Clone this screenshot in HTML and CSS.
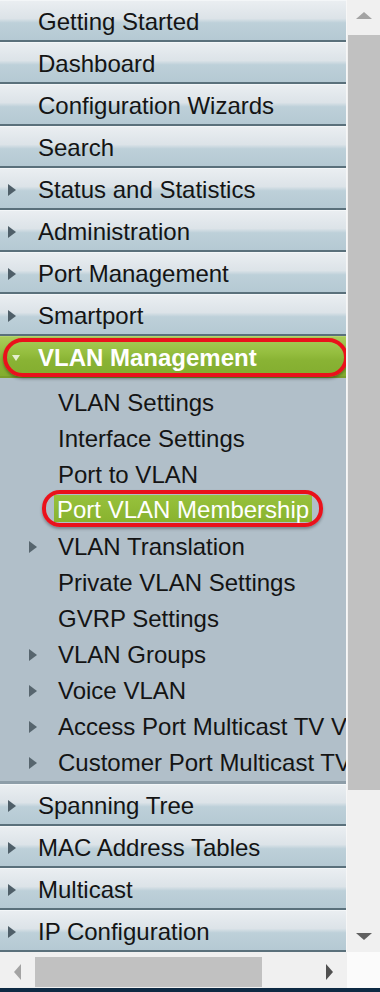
FILE: index.html
```html
<!DOCTYPE html>
<html lang="en">
<head>
    <meta charset="UTF-8">
    <meta name="viewport" content="width=device-width, initial-scale=1.0">
    <title>Switch Menu</title>
    <link rel="stylesheet" href="styles.css">
</head>
<body>
    <div class="window">
        <nav class="menu">
            <div class="top-row">Getting Started</div>
            <div class="top-row">Dashboard</div>
            <div class="top-row">Configuration Wizards</div>
            <div class="top-row">Search</div>
            <div class="top-row has-children"><span class="arrow"></span>Status and Statistics</div>
            <div class="top-row has-children"><span class="arrow"></span>Administration</div>
            <div class="top-row has-children"><span class="arrow"></span>Port Management</div>
            <div class="top-row has-children"><span class="arrow"></span>Smartport</div>
            <div class="top-row open"><span class="arrow-down"></span>VLAN Management</div>

            <div class="sub-list">
                <div class="sub-row">VLAN Settings</div>
                <div class="sub-row">Interface Settings</div>
                <div class="sub-row">Port to VLAN</div>
                <div class="sub-row"><span class="selected">Port VLAN Membership</span></div>
                <div class="sub-row"><span class="arrow"></span>VLAN Translation</div>
                <div class="sub-row">Private VLAN Settings</div>
                <div class="sub-row">GVRP Settings</div>
                <div class="sub-row"><span class="arrow"></span>VLAN Groups</div>
                <div class="sub-row"><span class="arrow"></span>Voice VLAN</div>
                <div class="sub-row"><span class="arrow"></span>Access Port Multicast TV VLAN</div>
                <div class="sub-row"><span class="arrow"></span>Customer Port Multicast TV VLAN</div>
            </div>

            <div class="top-row has-children"><span class="arrow"></span>Spanning Tree</div>
            <div class="top-row has-children"><span class="arrow"></span>MAC Address Tables</div>
            <div class="top-row has-children"><span class="arrow"></span>Multicast</div>
            <div class="top-row has-children"><span class="arrow"></span>IP Configuration</div>
        </nav>

        <!-- vertical scrollbar -->
        <div class="vscroll">
            <div class="scroll-btn"><span class="tri-up"></span></div>
            <div class="vthumb"></div>
            <div class="vtrack"></div>
            <div class="scroll-btn"><span class="tri-down"></span></div>
        </div>

        <!-- horizontal scrollbar -->
        <div class="hscroll">
            <div class="hbtn"><span class="tri-left"></span></div>
            <div class="hthumb"></div>
            <div class="htrack"></div>
            <div class="hbtn"><span class="tri-right"></span></div>
        </div>
        <div class="corner"></div>

        <div class="footer-line"></div>
    </div>
</body>
</html>
```

FILE: styles.css
```css
body {
    margin: 0;
    padding: 0;
    background-color: #f0f0f0;
    font-family: "Liberation Sans", Arial, sans-serif;
}

.window {
    width: 380px;
    height: 992px;
    display: grid;
    grid-template-columns: 347px 33px;
    grid-template-rows: 952px 36px 4px;
    overflow: hidden;
}

.menu {
    overflow: hidden;
    background-color: #fff;
    border-right: 1px solid #f7f7f7;
}

/* top level rows */
.top-row {
    height: 39px;
    line-height: 42px;
    border-top: 1px solid #f3f6f8;
    border-bottom: 2px solid #5a707b;
    background: linear-gradient(to bottom, #eaeef1 0%, #dce3e8 45%, #bdd0d9 56%, #b5c9d3 100%);
    padding-left: 38px;
    font-size: 24px;
    color: #141414;
    white-space: nowrap;
    position: relative;
}

.arrow {
    position: absolute;
    left: 8px;
    top: 50%;
    margin-top: -5px;
    width: 0;
    height: 0;
    border-left: 8px solid #4f5f69;
    border-top: 6px solid transparent;
    border-bottom: 6px solid transparent;
}

/* open section */
.top-row.open {
    background: linear-gradient(to bottom, #a9cc5a 0%, #95be3f 40%, #89b334 60%, #83ad2f 100%);
    border-top-color: #b6d46f;
    border-bottom-color: #7a9f2c;
    color: #fff;
    font-weight: bold;
}

.top-row.open::after {
    content: "";
    position: absolute;
    left: 3px;
    right: -2px;
    top: 1px;
    bottom: -1px;
    border: 4px solid #ea111b;
    border-radius: 21px;
    box-shadow: 0 2px 3px rgba(0, 0, 0, 0.35);
}

.arrow-down {
    position: absolute;
    left: 12px;
    top: 50%;
    margin-top: -2px;
    width: 0;
    height: 0;
    border-top: 6px solid #e4eed0;
    border-left: 4px solid transparent;
    border-right: 4px solid transparent;
}

/* sub menu */
.sub-list {
    background-color: #b1bfc9;
    padding-top: 6px;
    padding-bottom: 1px;
    border-bottom: 3px solid #8d9da8;
}

.sub-row {
    height: 36px;
    line-height: 38px;
    padding-left: 58px;
    font-size: 24px;
    color: #141414;
    white-space: nowrap;
    position: relative;
}

.sub-row .arrow {
    left: 29px;
    border-left-color: #57656e;
}

.selected {
    display: inline-block;
    position: relative;
    height: 27px;
    line-height: 29px;
    margin-left: -4px;
    padding: 0 3px;
    background: linear-gradient(to bottom, #98c23c, #88b22f);
    color: #fff;
    vertical-align: 1px;
}

.selected::after {
    content: "";
    position: absolute;
    left: -12px;
    right: -11px;
    top: -5px;
    bottom: -5px;
    border: 4px solid #ea111b;
    border-radius: 18px;
    box-shadow: 0 2px 3px rgba(0, 0, 0, 0.3);
}

/* scrollbars */
.vscroll {
    display: flex;
    flex-direction: column;
    background-color: #f0f0f0;
    padding-left: 1px;
}

.scroll-btn {
    height: 35px;
    display: flex;
    align-items: center;
    justify-content: center;
}

.vthumb {
    height: 755px;
    background-color: #c1c1c1;
}

.vtrack {
    flex: 1;
}

.tri-up {
    width: 0;
    height: 0;
    border-bottom: 7px solid #a3a3a3;
    border-left: 8px solid transparent;
    border-right: 8px solid transparent;
    margin-top: -4px;
}

.tri-down {
    width: 0;
    height: 0;
    border-top: 7px solid #606060;
    border-left: 8px solid transparent;
    border-right: 8px solid transparent;
    margin-top: 4px;
}

.hscroll {
    display: flex;
    align-items: stretch;
    background-color: #f0f0f0;
    padding: 5px 0 1px;
}

.hbtn {
    width: 35px;
    display: flex;
    align-items: center;
    justify-content: center;
}

.hthumb {
    width: 227px;
    background-color: #c1c1c1;
}

.htrack {
    flex: 1;
}

.tri-left {
    width: 0;
    height: 0;
    border-right: 7px solid #a3a3a3;
    border-top: 8px solid transparent;
    border-bottom: 8px solid transparent;
}

.tri-right {
    width: 0;
    height: 0;
    border-left: 7px solid #505050;
    border-top: 8px solid transparent;
    border-bottom: 8px solid transparent;
}

.corner {
    background-color: #fbfbfb;
}

.footer-line {
    grid-column: 1 / 3;
    background-color: #0e2a44;
}
```
